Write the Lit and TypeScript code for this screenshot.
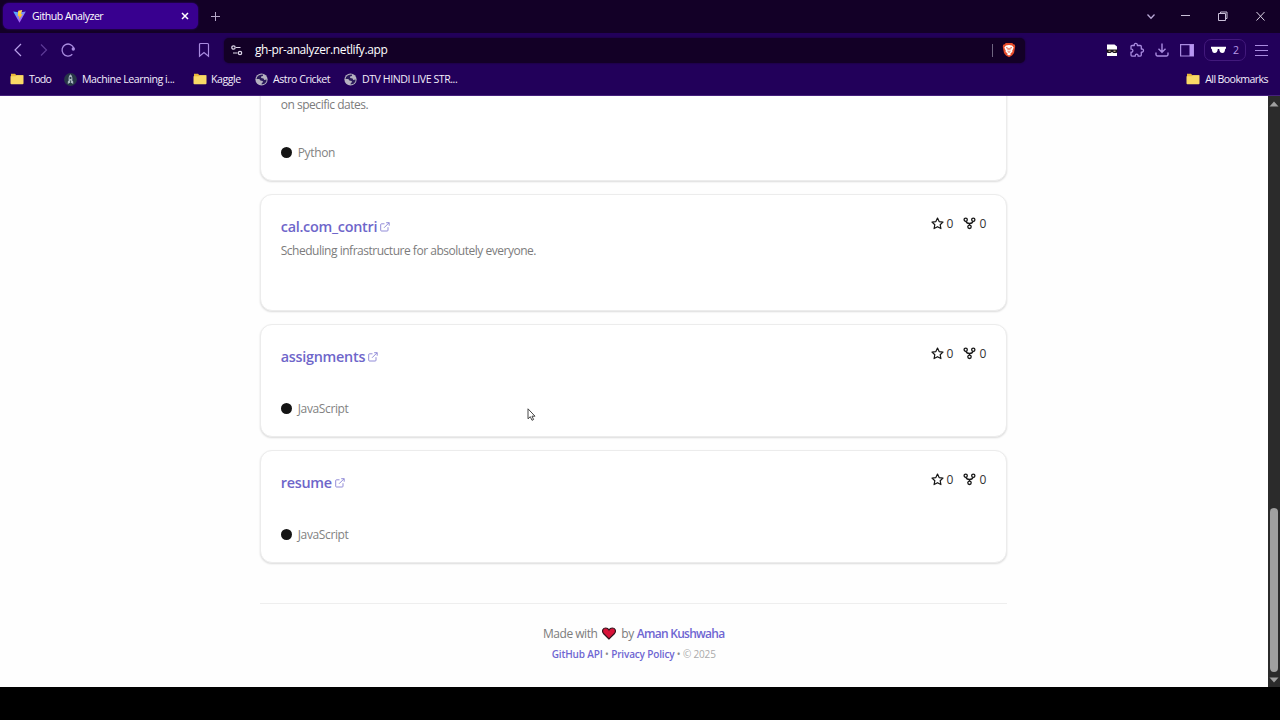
import { LitElement, html, css } from "lit";
import { customElement, property } from "lit/decorators.js";

const folder = html`<svg class="folder" width="14" height="12" viewBox="0 0 14 12">
  <path d="M1 .8h4l1.4 1.4H13V11H1z" fill="#e9b83a" />
  <path d="M.5 3.2h5.2l1-.9h6.8v8a.9.9 0 0 1-.9.9H1.4a.9.9 0 0 1-.9-.9z" fill="#f9da66" />
</svg>`;

const globe = html`<svg width="13" height="13" viewBox="0 0 13 13">
  <circle cx="6.5" cy="6.5" r="6.1" fill="#b5b1c0" />
  <path d="M5.600 1.700 8.200 1.500 7.800 3 6 3.600 6.200 5 8.600 5.400 9.200 7 11.600 6.600 11.300 8.800 9.500 10.800 6.600 11.500 6.800 9.900 8.200 9 7.500 7.900 5.400 7.500 4.300 6 1.500 5.900 2.100 4 3.600 2.600z" fill="#2b1a5c" />
</svg>`;

const gear = html`<svg width="13" height="13" viewBox="0 0 13 13">
  <circle cx="6.5" cy="6.5" r="6.4" fill="#273747" />
  <path d="M6.500 1.300C4.700 2.800 4.300 5.300 4.700 7.500L3.800 8.600v2.400l1.700-1h2l1.700 1V8.600l-.9-1.100c.4-2.200 0-4.700-1.800-6.200z" fill="#a9b7c1" />
  <circle cx="6.500" cy="5" r="1" fill="#273747" /><path d="M6.500 7.500v2.500" stroke="#273747" stroke-width=".8" />
</svg>`;

@customElement("browser-tabs")
class BrowserTabs extends LitElement {
  static styles = css`
    :host { display: flex; align-items: center; height: 33px; box-sizing: border-box; background: #130027; color: #fff; padding: 0 12px 1px 3px; }
    .tab { display: flex; align-items: center; width: 195px; height: 26px; box-sizing: border-box; padding: 0 8px 0 10px; border-radius: 6px; background: #38008f; box-shadow: 0 0 2px #3e079a; }
    .title { flex: 1; margin-left: 6px; font-size: 10.6px; letter-spacing: -0.5px; line-height: 16px; }
    .plus { margin-left: 13px; }
    .controls { margin-left: auto; display: flex; gap: 20px; align-items: center; }
    svg { display: block; flex: none; }
  `;
  render() {
    return html`
      <div class="tab">
        <svg width="13" height="13" viewBox="0 0 13 13">
          <defs>
            <linearGradient id="v" x1="0" y1="0" x2=".6" y2="1"><stop offset="0" stop-color="#41b8ff" /><stop offset="1" stop-color="#bd54f5" /></linearGradient>
            <linearGradient id="b" x1="0" y1="0" x2="0" y2="1"><stop offset="0" stop-color="#ffe45c" /><stop offset="1" stop-color="#ffa800" /></linearGradient>
          </defs>
          <path d="M.2 1.500 6.500 12.800 12.800 1.500 6.500 2.500z" fill="url(#v)" />
          <path d="M9.300 0 5.200 .8 4.800 6.300h1.600L5.900 9.500 9.700 4.200H7.900z" fill="url(#b)" />
        </svg>
        <span class="title">Github Analyzer</span>
        <svg width="10" height="10" viewBox="0 0 10 10"><path d="m2 2 6 6M8 2 2 8" stroke="#fff" stroke-width="1.500" /></svg>
      </div>
      <svg class="plus" width="9" height="9" viewBox="0 0 9 9"><path d="M4.500 0v9M0 4.500h9" stroke="#b5a8c8" /></svg>
      <div class="controls">
        <svg width="16" height="16" viewBox="0 0 16 16"><path d="m3.500 6.500 3.500 3.700 3.500-3.700" fill="none" stroke="#b9a8d6" stroke-width="1.300" /></svg>
        <svg width="16" height="16" viewBox="0 0 16 16"><path d="M1 7.500h9" stroke="#c9bfd8" /></svg>
        <svg width="16" height="16" viewBox="0 0 16 16"><path d="M2.500 5.500h7v7h-7zM4.500 5.500v-1.500h6.500v6.500h-1.500" fill="none" stroke="#c9bfd8" /></svg>
        <svg width="16" height="16" viewBox="0 0 16 16"><path d="m4.500 4 8 8.500M12.500 4l-8 8.500" stroke="#ddd5e6" /></svg>
      </div>`;
  }
}

@customElement("browser-toolbar")
class BrowserToolbar extends LitElement {
  static styles = css`
    :host { display: flex; align-items: center; height: 34px; box-sizing: border-box; background: #22005a; padding: 0 11px 0 10px; color: #fff; }
    svg { display: block; flex: none; }
    .nav { display: flex; gap: 9px; }
    .mark { margin-left: 120px; }
    .url { display: flex; align-items: center; width: 801px; height: 25px; box-sizing: border-box; margin-left: 12px; padding: 0 9px 0 6px; border-radius: 5px; background: #130026; box-shadow: 0 0 2px #130026; }
    .address { margin-left: 11px; flex: 1; font-size: 12px; letter-spacing: -0.41px; line-height: 18px; white-space: nowrap; }
    .bar { width: 1px; height: 13px; background: #6f6580; margin-right: 9px; }
    .tools { margin-left: auto; display: flex; align-items: center; gap: 9px; }
    .pill { display: flex; align-items: center; justify-content: center; gap: 7px; width: 42px; height: 22px; box-sizing: border-box; border: 1px solid #42197c; border-radius: 7px; margin: 0 -1px 0 0; font-size: 10.5px; color: #b99be8; }
  `;
  render() {
    const c = "#a98be0";
    return html`
      <div class="nav">
        <svg width="16" height="16" viewBox="0 0 16 16"><path d="M11 2 5 8l6 6" fill="none" stroke="#b9a0ea" stroke-width="1.200" /></svg>
        <svg width="16" height="16" viewBox="0 0 16 16"><path d="m6 2.500 5.500 5.500L6 13.500" fill="none" stroke="#5d3a97" stroke-width="1.200" /></svg>
        <svg width="16" height="16" viewBox="0 0 16 16"><path d="M12.300 12.300A6 6 0 1 1 13.800 6.300" fill="none" stroke=${c} stroke-width="1.300" /><circle cx="13.300" cy="7" r="1.700" fill=${c} /></svg>
      </div>
      <svg class="mark" width="16" height="16" viewBox="0 0 16 16"><path d="M3.500 2.500a1 1 0 0 1 1-1h7a1 1 0 0 1 1 1v11.700L8 10.500l-4.500 3.700z" fill="none" stroke=${c} stroke-width="1.200" /></svg>
      <div class="url">
        <svg width="14" height="12" viewBox="0 0 14 12" fill="none" stroke="#ddd6e8" stroke-width="1.200"><circle cx="3.500" cy="3.500" r="1.700" /><path d="M6 3.500h4.500M3 9h4.500" /><circle cx="10" cy="9" r="1.700" /></svg>
        <span class="address">gh-pr-analyzer.netlify.app</span>
        <i class="bar"></i>
        <svg width="14" height="16" viewBox="0 0 14 16">
          <path d="M3.800 1h6.400l1.200 1.300 1.500.4.300 2L12 11l-2 2.500L7 15.300 4 13.500 2 11 .8 4.700l.3-2 1.500-.4z" fill="#e84b2a" />
          <path d="M4 3.600 7 3l3 .6 1.700 2-1.500 3.200.2 1.200-2 1.200.6 1L7 13.500 5 12.200l.6-1-2-1.200.2-1.200L2.300 5.600z" fill="#fff" />
          <path d="m4 5.600 2.300.7-.3 2M10 5.600l-2.300.7.3 2M5.700 9.600 7 10.200l1.300-.6" fill="none" stroke="#e84b2a" stroke-width=".9" />
        </svg>
      </div>
      <div class="tools">
        <svg width="16" height="16" viewBox="0 0 16 16"><path d="M3 2.500h7.500l2.500 2V14H3z" fill="#fff" /><path d="M2.500 7.500h11v2.200l-1 1.300h-3L8 9.900 6.500 11h-3l-1-1.300z" fill="#17111d" /><path d="M4.500 9.200h2M9.500 9.200h2" stroke="#eed7ac" /></svg>
        <svg width="16" height="16" viewBox="0 0 16 16"><path d="M2 4.500a1 1 0 0 1 1-1h2.300c-.7-2.800 3.600-2.800 3 0h3a1 1 0 0 1 1 1v2.600c2.900-.8 2.900 3.700 0 3v3a1 1 0 0 1-1 1H9c.7-2.600-3.300-2.600-2.700 0H3a1 1 0 0 1-1-1v-3c2.500.5 2.500-3.600 0-3z" fill="none" stroke=${c} stroke-width="1.300" stroke-linejoin="round" /></svg>
        <svg width="16" height="16" viewBox="0 0 16 16"><path d="M8 1.500v8.500M4.500 6.800 8 10.300l3.500-3.500M2 10.500v2a1.500 1.500 0 0 0 1.500 1.500h9a1.500 1.500 0 0 0 1.500-1.500v-2" fill="none" stroke=${c} stroke-width="1.400" /></svg>
        <svg width="16" height="16" viewBox="0 0 16 16"><path d="M1.600 2.600h12.800v11.400H1.600z" fill="none" stroke=${c} stroke-width="1.200" /><path d="M10.500 2.600h3.900v11.400h-3.900z" fill="#b795f3" /></svg>
        <div class="pill">
          <svg width="15" height="8" viewBox="0 0 15 8"><path d="M0 .7h15v1.800l-.8.4C13.900 5.800 13 7 11.400 7 9.300 7 8.500 5.500 8.200 3H6.800C6.500 5.500 5.700 7 3.600 7 2 7 1.100 5.800.8 2.900L0 2.500z" fill="#fff" /></svg>
          <span>2</span>
        </div>
        <svg width="15" height="16" viewBox="0 0 15 16"><path d="M1 3.500h13M1 8.500h13M1 13.500h13" stroke=${c} stroke-width="1.100" /></svg>
      </div>`;
  }
}

@customElement("bookmark-bar")
class BookmarkBar extends LitElement {
  static styles = css`
    :host { display: flex; align-items: center; height: 28px; background: #22005a; border-bottom: 1px solid #45207c; padding: 0 12px 0 10px; color: #f3eefa; font-size: 10.6px; }
    .item { display: flex; align-items: center; gap: 5px; white-space: nowrap; height: 24px; margin-bottom: 4px; }
    .todo { width: 54px; }
    .ml { width: 129px; }
    .kaggle { width: 62px; }
    .kaggle .label { margin-left: -1px; }
    .astro { width: 89px; }
    .all { margin-left: auto; }
    .label { line-height: 16px; letter-spacing: -0.45px; }
    .todo .label { letter-spacing: -0.7px; }
    .all .label { letter-spacing: -0.6px; }
    svg { display: block; flex: none; }
  `;
  render() {
    return html`
      <div class="item todo">${folder}<span class="label">Todo</span></div>
      <div class="item ml">${gear}<span class="label">Machine Learning i...</span></div>
      <div class="item kaggle">${folder}<span class="label">Kaggle</span></div>
      <div class="item astro">${globe}<span class="label">Astro Cricket</span></div>
      <div class="item">${globe}<span class="label">DTV HINDI LIVE STR...</span></div>
      <div class="item all">${folder}<span class="label">All Bookmarks</span></div>`;
  }
}

@customElement("repo-card")
class RepoCard extends LitElement {
  @property() name = "";
  @property() description = "";
  @property() language = "";
  static styles = css`
    :host { display: flex; flex-direction: column; box-sizing: border-box; padding: 19px 20px 18px 19.5px; border: 1px solid #ececec; border-radius: 12px; background: #fff; box-shadow: 0 1px 2px rgba(0, 0, 0, 0.14); }
    .head { display: flex; justify-content: space-between; align-items: flex-start; }
    .name { display: flex; align-items: center; gap: 4px; margin-top: 1px; color: #6e66ca; font-size: 14.4px; font-weight: 600; line-height: 24px; letter-spacing: -0.27px; }
    .name svg { margin-left: -1px; margin-top: -1px; }
    .stats { display: flex; gap: 10px; margin-top: 0.6px; color: #333; font-size: 12px; line-height: 18px; }
    .stat { display: flex; align-items: center; gap: 3px; }
    .desc { margin: 3px 0 0; color: #7c7c7c; font-size: 12px; letter-spacing: -0.48px; line-height: 18px; }
    .lang { display: flex; align-items: center; gap: 6px; margin-top: auto; color: #828282; font-size: 12px; line-height: 18px; letter-spacing: -0.37px; }
    .dot { width: 11px; height: 11px; border-radius: 50%; background: #141414; margin-top: -2px; }
    svg { display: block; flex: none; }
  `;
  render() {
    return html`
      ${this.name
        ? html`<div class="head">
            <span class="name">${this.name}
              <svg width="10" height="10" viewBox="0 0 10 10" fill="none" stroke="#8780d4" stroke-width=".9"><path d="M4.500 1.800H1.500a.8.8 0 0 0-.8.8v5.600a.8.8 0 0 0 .8.8h5.700a.8.8 0 0 0 .8-.8V5.200M4 5.800l5-5M6.200.7h3v3" /></svg>
            </span>
            <span class="stats">
              <span class="stat"><svg width="13" height="13" viewBox="0 0 24 24" fill="none" stroke="#151515" stroke-width="2.200" stroke-linejoin="round"><path d="m12 2 3 6.500 7.200.8-5.300 4.900 1.400 7.200L12 17.900l-6.300 3.500 1.400-7.200L1.800 9.300 9 8.500z" /></svg>0</span>
              <span class="stat"><svg width="13" height="13" viewBox="0 0 13 13" fill="none" stroke="#151515" stroke-width="1.300"><circle cx="2.700" cy="2.700" r="1.600" /><circle cx="10.300" cy="2.700" r="1.600" /><circle cx="6.500" cy="9.800" r="1.700" /><path d="M3 4.300C3.300 6 4.500 6.300 6.500 6.300S9.700 6 10 4.300M6.500 6.300v1.800" /></svg>0</span>
            </span>
          </div>`
        : ""}
      ${this.description ? html`<p class="desc">${this.description}</p>` : ""}
      ${this.language ? html`<div class="lang"><i class="dot"></i>${this.language}</div>` : ""}`;
  }
}

@customElement("app-root")
class AppRoot extends LitElement {
  static styles = css`
    :host { display: flex; flex-direction: column; width: 1280px; height: 720px; overflow: hidden; background: #000; font-family: "Open Sans", "Noto Sans", sans-serif; }
    .view { display: flex; height: 590.5px; background: #fff; position: relative; overflow: hidden; }
    .page { flex: 1; display: flex; flex-direction: column; align-items: center; background: #fefefe; }
    .list { display: flex; flex-direction: column; gap: 13px; width: 747px; margin-top: -23px; }
    .first { height: 108px; }
    .cal { height: 117px; }
    .short { height: 113px; }
    .last { height: 113.4px; }
    footer { width: 747px; margin-top: 39.6px; padding-top: 20px; border-top: 1px solid #eee; text-align: center; }
    .made { display: flex; justify-content: center; align-items: center; font-size: 12px; line-height: 19px; letter-spacing: -0.48px; color: #7c7c7c; }
    .made .link { letter-spacing: -0.73px; margin-left: 3px; }
    .made svg { margin: 0 5px; }
    .links { font-size: 10px; line-height: 16px; letter-spacing: -0.16px; margin-top: 3px; color: #aaa; }
    .link { color: #6f66d2; font-weight: 600; }
    .sep { color: #8a8a8a; }
    .scroll { width: 12.5px; display: flex; flex-direction: column; align-items: center; background: #2b2b2b; padding: 5px 0 4px; box-sizing: border-box; }
    .thumb { width: 8px; height: 164px; margin: auto 0 5px; border-radius: 4px; background: #a0a0a0; }
    .cursor { position: absolute; left: 527px; top: 312px; }
  `;
  render() {
    return html`
      <browser-tabs></browser-tabs>
      <browser-toolbar></browser-toolbar>
      <bookmark-bar></bookmark-bar>
      <main class="view">
        <div class="page">
          <div class="list">
            <repo-card class="first" description="on specific dates." language="Python"></repo-card>
            <repo-card class="cal" name="cal.com_contri" description="Scheduling infrastructure for absolutely everyone."></repo-card>
            <repo-card class="short" name="assignments" language="JavaScript"></repo-card>
            <repo-card class="last" name="resume" language="JavaScript"></repo-card>
          </div>
          <footer>
            <div class="made">Made with
              <svg width="14" height="13" viewBox="0 0 14 13"><path d="M7 12 1.500 6.500C-.5 4 1 1 3.700 1 5.200 1 6.300 1.700 7 3c.7-1.300 1.800-2 3.300-2C13 1 14.500 4 12.500 6.500z" fill="#d81238" stroke="#35151d" stroke-width="1.200" /></svg>
              by<span class="link">Aman Kushwaha</span></div>
            <div class="links"><span class="link">GitHub API</span> <span class="sep">•</span> <span class="link">Privacy Policy</span> <span class="sep">•</span> © 2025</div>
          </footer>
        </div>
        <div class="scroll">
          <svg width="10" height="6" viewBox="0 0 10 6"><path d="M5 .5 9.500 5.500h-9z" fill="#a0a0a0" /></svg>
          <i class="thumb"></i>
          <svg width="10" height="6" viewBox="0 0 10 6"><path d="M5 5.500.5.500h9z" fill="#a0a0a0" /></svg>
        </div>
        <svg class="cursor" width="9" height="13" viewBox="0 0 9 13"><path d="M1 .8v10l2.300-2.100L5 12.300l1.600-.8L5 8.200h3z" fill="#fff" stroke="#333" stroke-width=".9" /></svg>
      </main>`;
  }
}
